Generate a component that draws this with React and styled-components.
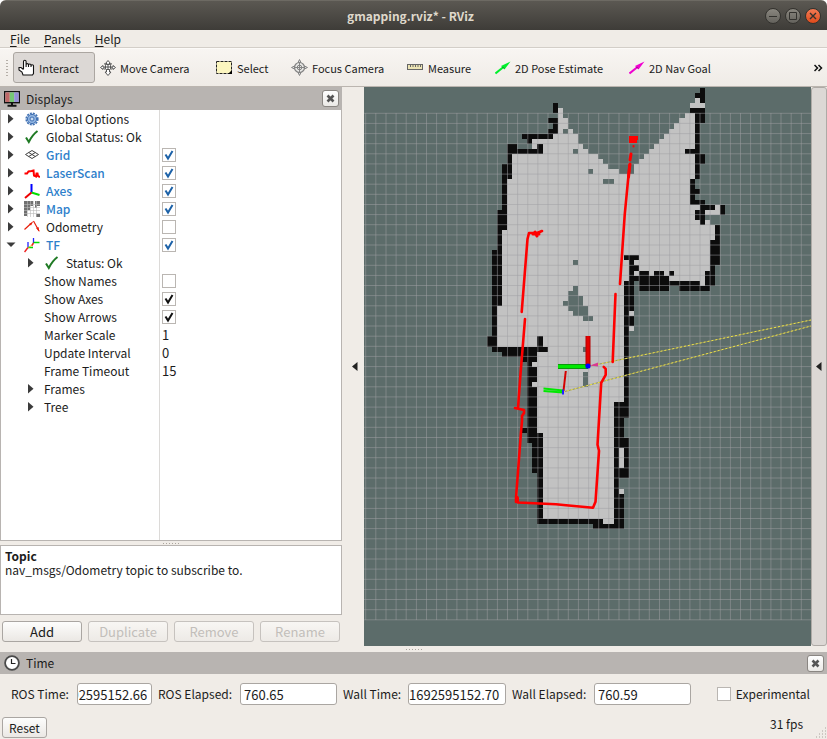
import React, { useEffect, useRef } from "react";
import styled, { createGlobalStyle } from "styled-components";

const Global = createGlobalStyle`
  * { box-sizing: border-box; }
  body {
    margin: 0;
    background: #fff;
    color: #1c1c1c;
    font: 12px/18px "Noto Sans CJK JP", "Noto Sans", sans-serif;
  }
  button, input { font: inherit; color: inherit; }
  button { cursor: pointer; }
  svg { display: block; flex: none; }
`;

/* ---------- window ---------- */

const Window = styled.div`
  display: flex;
  flex-direction: column;
  height: 100vh;
  overflow: hidden;
  background: #f0ece7;
  border-radius: 6px 6px 0 0;
`;

const TitleBar = styled.header`
  flex: none;
  display: grid;
  grid-template-columns: 1fr auto 1fr;
  align-items: center;
  height: 30px;
  padding-right: 6px;
  background: linear-gradient(#5b5852, #3e3c38);
  border-top: 1px solid #6d6a63;
`;

const Title = styled.h1`
  grid-column: 2;
  margin: 0;
  font-size: 12px;
  line-height: 18px;
  font-weight: 700;
  color: #dfd8cb;
`;

const WindowButtons = styled.div`
  display: flex;
  justify-content: flex-end;
  gap: 4px;
`;

const RoundButton = styled.button`
  display: grid;
  place-items: center;
  width: 16px;
  height: 16px;
  padding: 0;
  border: 1px solid #33322e;
  border-radius: 50%;
  background: ${(p) => (p.$close ? "linear-gradient(#f37b55, #df4b1b)" : "linear-gradient(#8a877f, #64625c)")};
`;

const MenuBar = styled.nav`
  flex: none;
  display: flex;
  gap: 14px;
  height: 18px;
  padding: 0 10px;
  border-bottom: 1px solid #d3cec8;
`;

const MenuItem = styled.button`
  padding: 0;
  border: 0;
  background: none;
  font-size: 12px;
  line-height: 17px;
`;

const Key = styled.span`
  text-decoration: underline;
  text-underline-offset: 2px;
`;

const ToolBar = styled.div`
  flex: none;
  display: flex;
  align-items: center;
  height: 39px;
  padding: 0 4px 0 5px;
  background: linear-gradient(#f8f5f2, #efebe6);
  border-top: 1px solid #fcfaf8;
  border-bottom: 1px solid #bbb5af;
  overflow: hidden;
`;

const Grip = styled.div`
  width: 4px;
  height: 18px;
  margin-right: 4px;
  background: radial-gradient(circle, #b5afa8 1px, transparent 1px) 0 0 / 4px 3px;
`;

const Tool = styled.button`
  display: flex;
  align-items: center;
  gap: 4px;
  flex: none;
  height: 31px;
  width: ${(p) => p.$width}px;
  padding: 0 4px;
  border: 1px solid ${(p) => (p.$active ? "#aba6a1" : "transparent")};
  border-radius: 3px;
  background: ${(p) => (p.$active ? "#dcd8d5" : "none")};
  font-size: 11px;
  white-space: nowrap;
`;

const More = styled.button`
  margin-left: auto;
  padding: 0;
  border: 0;
  background: none;
`;

const Workspace = styled.main`
  flex: 1;
  display: flex;
  min-height: 0;
`;

/* ---------- dock panels ---------- */

const Dock = styled.section`
  flex: none;
  display: flex;
  flex-direction: column;
  width: 342px;
`;

const DockHeader = styled.div`
  flex: none;
  display: flex;
  align-items: center;
  gap: 6px;
  height: ${(p) => p.$height}px;
  padding: 0 3px 0 4px;
  background: #b8b4b1;
`;

const DockTitle = styled.h2`
  flex: 1;
  margin: 0;
  font-size: 12px;
  line-height: 18px;
  font-weight: 400;
`;

const CloseButton = styled.button`
  display: grid;
  place-items: center;
  width: 17px;
  height: 17px;
  padding: 0;
  border: 1px solid #8a8682;
  border-radius: 3px;
  background: linear-gradient(#fefefe, #ebe9e6);
`;

const Tree = styled.div`
  flex: 1;
  min-height: 0;
  overflow: hidden;
  border: 1px solid #b8b4b1;
  border-top: 0;
  background: linear-gradient(90deg, transparent 158px, #dcdad8 158px, #dcdad8 159px, transparent 159px) #fff;
`;

const TreeRow = styled.div`
  display: grid;
  grid-template-columns: 159px 1fr;
  align-items: center;
  height: 18px;
`;

const NameCell = styled.div`
  display: flex;
  align-items: center;
  padding-left: ${(p) => (p.$child ? 25 : 5)}px;
  color: ${(p) => (p.$link ? "#2e7fcb" : "#1c1c1c")};
  font-weight: ${(p) => (p.$link ? 500 : 400)};
  white-space: nowrap;
`;

const Expander = styled.span`
  display: grid;
  place-items: center;
  flex: none;
  width: 10px;
  height: 16px;
  margin-right: 8px;
`;

const RowIcon = styled.span`
  flex: none;
  width: 22px;
`;

const Value = styled.span`
  padding-left: 2px;
  font-size: 13px;
`;

const CheckCell = styled.span`
  display: grid;
  width: 14px;
  height: 14px;
  margin-left: ${(p) => (p.$tree ? 2 : 0)}px;
  & > * { grid-area: 1 / 1; }
  & > svg { pointer-events: none; }
`;

const Box = styled.input.attrs({ type: "checkbox" })`
  appearance: none;
  width: 14px;
  height: 14px;
  margin: 0;
  border: 1px solid #bab6b2;
  background: #fff;
`;

const Handle = styled.div`
  flex: none;
  align-self: center;
  width: 18px;
  height: ${(p) => p.$height}px;
  background: radial-gradient(circle, #aaa49d 1px, transparent 1px) 0 center / 3px 3px repeat-x;
`;

const Description = styled.div`
  flex: none;
  height: 70px;
  padding: 3px 4px;
  border: 1px solid #b8b4b1;
  background: #fff;
  line-height: 14px;
`;

const ButtonRow = styled.div`
  flex: none;
  display: grid;
  grid-template-columns: repeat(4, 1fr);
  gap: 6px;
  padding: 6px 2px 4px;
`;

const PushButton = styled.button`
  height: 21px;
  padding: 0 6px;
  border: 1px solid #aaa6a2;
  border-radius: 3px;
  background: linear-gradient(#fdfdfc, #ebe8e4);
  font-size: ${(p) => (p.$small ? 12 : 13)}px;
  line-height: 16px;
  &:disabled {
    color: #c2beba;
    border-color: #c6c2be;
    background: linear-gradient(#f8f6f3, #edeae6);
  }
`;

const CollapseStrip = styled.button`
  flex: none;
  display: grid;
  place-items: center;
  width: ${(p) => p.$width}px;
  padding: 0 0 0 ${(p) => (p.$raised ? 0 : 4)}px;
  border: ${(p) => (p.$raised ? "1px solid #aeaaa6" : "0")};
  border-radius: 3px;
  background: ${(p) => (p.$raised ? "#dcd8d5" : "none")};
`;

const View = styled.div`
  flex: 1;
  min-width: 0;
  background: #5c6c6a;
  & > svg { width: 100%; height: 100%; }
`;

/* ---------- time panel ---------- */

const TimeFields = styled.div`
  flex: none;
  display: flex;
  align-items: center;
  height: 40px;
  padding: 0 17px 0 11px;
  gap: 6px;
`;

const FieldLabel = styled.label`
  flex: none;
  width: ${(p) => p.$width}px;
  white-space: nowrap;
`;

const Field = styled.input`
  width: ${(p) => p.$width}px;
  height: 22px;
  padding: 0 ${(p) => (p.$scrolled ? "4px 0 0" : "3px")};
  border: 1px solid #aaa6a2;
  border-radius: 3px;
  background: #fff;
  font-size: 13px;
  margin-right: ${(p) => (p.$last ? "auto" : "0")};
`;

const ExperimentalLabel = styled.label`
  display: flex;
  align-items: center;
  gap: 5px;
  white-space: nowrap;
`;

const Footer = styled.footer`
  flex: none;
  display: flex;
  justify-content: space-between;
  align-items: flex-start;
  height: 25px;
  padding: 3px 0 0 2px;
`;

const Status = styled.div`
  display: flex;
  align-items: flex-end;
  align-self: stretch;
  gap: 12px;
`;

const Fps = styled.span`
  align-self: flex-start;
  line-height: 14px;
`;

/* ---------- icons ---------- */

const Svg = ({ w = 16, h = 16, children }) => (
  <svg width={w} height={h} viewBox={`0 0 ${w} ${h}`} fill="none" aria-hidden="true">
    {children}
  </svg>
);

const Hand = () => (
  <Svg w={17} h={17}>
    <path d="M5.500 10V2.500a1.300 1.300 0 0 1 2.600 0V8 5.800a1.200 1.200 0 0 1 2.400 0V8 6.300a1.200 1.200 0 0 1 2.500 0V8 7a1.200 1.200 0 0 1 2.500 0v7.500l-1 1.500H5l-1-3L1 11V8.500h2l2.500 2" fill="#fff" stroke="#111" strokeWidth="1.100" />
  </Svg>
);

const MoveIcon = () => (
  <Svg>
    <g stroke="#555" fill="#fff" strokeWidth="1">
      <path d="M8 .5l2.500 3H9v3.500h4V5.500l2.500 2-2.500 2V8H9.500v4H11l-3 3.500L5 12h1.500V8H3v1.500l-2.500-2 2.500-2V7h4V3.500H5.500z" />
      <path d="M4 3.500l7.500 6M12 3.500l-7.500 6" />
      <rect x="5.500" y="4.500" width="5" height="5" rx="1" />
      <path d="M8 5v4M6 7h4" />
    </g>
  </Svg>
);

const SelectIcon = () => (
  <Svg w={17} h={14}>
    <rect x=".5" y=".5" width="15" height="12" fill="#fcf6c0" stroke="#222" strokeDasharray="3 1" />
    <path d="M16 9v4h-4z" fill="#000" />
  </Svg>
);

const FocusIcon = () => (
  <Svg w={17} h={17}>
    <g stroke="#858585">
      <circle cx="8.500" cy="8.500" r="5" fill="#e8e8e6" strokeWidth="1.200" />
      <circle cx="8.500" cy="8.500" r="2.300" />
      <path d="M8.500 1v15M1 8.500h15" />
      <path d="M7 3.500h3L8.500 .5zM7 13.500h3l-1.500 3zM3.500 7v3L.5 8.500zM13.500 7v3l3-1.500z" fill="#ddd" />
    </g>
  </Svg>
);

const Ruler = () => (
  <Svg w={17} h={7}>
    <rect x=".5" y=".5" width="15" height="5" fill="#ece4b4" stroke="#666" />
    <path d="M3.500 1v2M6 1v2M8.500 1v2M11 1v2M13.500 1v2" stroke="#666" />
  </Svg>
);

const ArrowTool = ({ color }) => (
  <Svg w={16} h={14}>
    <path d="M.5 12.500l8-6.500" stroke={color} strokeWidth="2" />
    <path d="M15.500 .5L6 5l3.500 3.500z" fill={color} />
    <path d="M7.500 6l1.500 1.500" stroke="#222" strokeOpacity=".6" />
  </Svg>
);

const Monitor = () => (
  <Svg>
    <rect x=".7" y=".7" width="14.600" height="11" fill="#eee" stroke="#111" strokeWidth="1.400" />
    <path d="M1.400 1.400h4.400V11H1.400z" fill="#c06868" />
    <path d="M5.800 1.400h4.400V11H5.800z" fill="#76c876" />
    <path d="M10.200 1.400h4.400V11h-4.400z" fill="#9490d8" />
    <path d="M8 12v2M3.500 14.800h9" stroke="#111" strokeWidth="2" />
  </Svg>
);

const Clock = () => (
  <Svg>
    <circle cx="8" cy="8" r="6.900" fill="#fff" stroke="#4a4a4a" strokeWidth="1.800" />
    <path d="M7.500 4v4.500h4" stroke="#222" strokeWidth="1.200" />
  </Svg>
);

const Gear = () => (
  <Svg>
    <circle cx="8" cy="8" r="5.700" stroke="#4272b4" strokeWidth="1.800" strokeDasharray="2 1" />
    <circle cx="8" cy="8" r="4.600" fill="#8fb3e0" stroke="#4272b4" />
    <circle cx="8" cy="8" r="2" fill="#c9dcf2" stroke="#4272b4" />
  </Svg>
);

const Tick = () => (
  <Svg>
    <path d="M2 8.500l2.800 4.500C7 8.500 9.500 5 13.500 2" stroke="#1f7a24" strokeWidth="2" />
  </Svg>
);

const GridIcon = () => (
  <Svg>
    <path d="M8 3.500l6.500 4L8 11.500l-6.500-4zM4.700 5.500l6.600 4M11.300 5.500l-6.600 4" stroke="#444" />
  </Svg>
);

const Laser = () => (
  <Svg>
    <path d="M.5 8.500H3L4.500 6.500l3-.5 2-.5.5 5 2 1 .5-3h1l.5 2.500 2 1" stroke="#f00" strokeWidth="2" />
  </Svg>
);

const AxesIcon = () => (
  <Svg>
    <path d="M7.500 9.500V1" stroke="#00f" strokeWidth="2" />
    <path d="M7.500 9.500l8 2.500" stroke="#0d0" strokeWidth="2" />
    <path d="M7.500 9.500L1 15" stroke="#e00" strokeWidth="2" />
  </Svg>
);

const MapIcon = () => (
  <Svg>
    <rect width="16" height="16" fill="#fff" />
    <path d="M0 0h9v5H6v4H3v6H0zM11 0h5v5h-3v2h-2zM12 13h4v3h-4z" fill="#707070" />
    <path d="M3.500 0v16M6.500 0v16M9.500 0v16M12.500 0v16M0 3.500h16M0 6.500h16M0 9.500h16M0 12.500h16" stroke="#bbb" strokeWidth=".6" />
  </Svg>
);

const Odom = () => (
  <Svg>
    <path d="M.5 10.500L7 4.500M9.500 2l5.500 10" stroke="#e8200c" strokeWidth="1.200" />
    <path d="M9.500 2L5 5l2 1.500zM15.500 13l-1-5-2.500 1z" fill="#e8200c" />
  </Svg>
);

const TfIcon = () => (
  <Svg>
    <path d="M9.500 1v5M4 5v5.500" stroke="#22f" strokeWidth="1.300" />
    <path d="M9.500 5.500h6M4 10.500h5" stroke="#0d0" strokeWidth="1.300" />
    <path d="M9.500 6l-2 3M4 10.500L.5 15" stroke="#e22" strokeWidth="1.500" />
    <path d="M8 8l-3.500 2.500" stroke="#f0c020" />
  </Svg>
);

const Cross = () => (
  <Svg w={9} h={9}>
    <path d="M1.500 1.500l6 6M7.500 1.500l-6 6" stroke="#555" strokeWidth="2.600" />
  </Svg>
);

const CheckMark = ({ color }) => (
  <Svg w={14} h={14}>
    <path d="M3.500 6.500L6 10.500 10.500 3" stroke={color} strokeWidth="2" />
  </Svg>
);

const RightArrow = () => (
  <Svg w={6} h={10}>
    <path d="M0 0v9.500L5.500 4.700z" fill="#3b3b3b" />
  </Svg>
);

const DownArrow = () => (
  <Svg w={10} h={10}>
    <path d="M.5 2.500h9L5 7z" fill="#3b3b3b" />
  </Svg>
);

const LeftArrow = () => (
  <Svg w={6} h={10}>
    <path d="M5.500 0v9L0 4.500z" fill="#222" />
  </Svg>
);

/* ---------- occupancy map ---------- */

// Cells are [column, row, width, height] on a lattice of map cells.
const FREE = [
  [14, 4, 1, 4], [15, 6, 1, 3], [14, 8, 3, 1], [13, 9, 5, 1], [9, 10, 9, 1], [9, 11, 1, 1],
  [11, 11, 8, 1], [11, 12, 9, 1], [5, 13, 17, 1], [5, 14, 18, 1], [5, 15, 19, 1], [5, 16, 21, 1],
  [41, 2, 1, 1], [40, 3, 3, 1],
  [39, 5, 2, 1], [38, 6, 3, 1], [37, 7, 4, 1], [36, 8, 5, 1], [35, 9, 6, 1], [34, 10, 7, 1],
  [33, 11, 8, 1], [32, 12, 9, 1], [31, 13, 10, 1], [30, 14, 11, 1], [29, 15, 12, 2],
  [4, 17, 37, 9], [41, 23, 2, 4], [45, 23, 1, 1], [43, 24, 3, 1], [43, 26, 1, 1],
  [3, 26, 40, 5], [43, 27, 2, 3], [3, 30, 41, 7], [30, 37, 14, 1], [42, 38, 1, 1],
  [2, 37, 26, 14], [12, 51, 16, 1], [10, 52, 18, 2], [9, 54, 19, 1], [9, 55, 19, 7],
  [10, 62, 16, 23], [23, 85, 3, 1], [26, 71, 1, 4], [26, 79, 1, 1],
];

const UNKNOWN = [
  [15, 8, 1, 1], [17, 12, 1, 1], [20, 16, 1, 1], [23, 18, 2, 1], [17, 34, 1, 1], [17, 39, 1, 1],
  [16, 40, 2, 1], [16, 41, 3, 1], [15, 42, 4, 1], [16, 43, 4, 1], [17, 44, 3, 1], [19, 45, 2, 1],
  [19, 51, 1, 1], [19, 56, 1, 3],
];

const OCCUPIED = [
  [13, 3, 1, 2], [12, 6, 2, 1], [13, 7, 1, 1], [12, 8, 2, 1], [7, 9, 6, 1], [8, 10, 1, 1],
  [10, 11, 1, 2], [6, 12, 5, 1], [4, 11, 2, 2], [4, 13, 1, 5], [3, 15, 1, 13], [2, 24, 1, 8],
  [1, 32, 2, 11], [1, 43, 1, 9], [0, 49, 2, 2], [1, 51, 11, 1], [3, 52, 7, 1], [7, 53, 3, 1],
  [10, 49, 1, 2], [8, 54, 1, 14], [9, 55, 1, 3], [9, 59, 1, 9], [7, 67, 1, 1], [8, 68, 3, 2],
  [9, 70, 2, 6], [10, 76, 1, 9], [10, 85, 13, 1], [21, 86, 6, 1], [25, 62, 1, 24], [26, 80, 1, 6],
  [26, 62, 2, 3], [27, 38, 1, 24], [26, 65, 1, 6], [27, 69, 1, 6], [26, 75, 2, 2],
  [28, 38, 1, 6], [28, 45, 1, 2], [27, 33, 3, 1], [28, 34, 1, 4], [29, 35, 1, 1], [29, 37, 1, 1],
  [30, 36, 2, 1], [33, 36, 2, 1], [36, 36, 1, 1], [30, 37, 6, 3], [36, 38, 6, 1], [38, 39, 6, 1],
  [43, 36, 2, 3], [44, 30, 2, 5], [44, 35, 1, 1], [45, 27, 1, 3], [42, 23, 1, 4],
  [42, 0, 1, 3], [41, 1, 1, 1], [40, 4, 3, 1], [41, 5, 2, 2], [41, 7, 1, 11], [39, 12, 3, 1],
  [41, 13, 2, 2], [40, 18, 1, 5], [41, 20, 1, 1], [41, 22, 2, 1], [41, 24, 1, 2],
  [43, 23, 2, 1], [46, 23, 1, 2],
];

const SMALL_FREE = [[28, 44, 1, 1], [28, 47, 1, 1]];

const toPath = (cells) => cells.map(([c, r, w, h]) => `M${c} ${r}h${w}v${h}h${-w}z`).join("");

const STEP = 10.13;
const columns = Array.from({ length: 45 }, (_, i) => `M${(365.7 + i * STEP).toFixed(1)} 113V620`).join("");
const rows = Array.from({ length: 51 }, (_, i) => `M364 ${(113.3 + i * STEP).toFixed(1)}H811`).join("");

const MapView = () => (
  <svg viewBox="364 87 447 559" preserveAspectRatio="xMidYMid slice" fill="none" role="img" aria-label="Map view">
    <g transform="translate(486.8 88) scale(5.07)" shapeRendering="crispEdges">
      <path d={toPath(FREE)} fill="#c2c2c2" />
      <path d={toPath(UNKNOWN)} fill="#5c6c6a" />
      <path d={toPath(OCCUPIED)} fill="#0c0c0c" />
      <path d={toPath(SMALL_FREE)} fill="#c2c2c2" />
    </g>
    <path d={columns + rows} stroke="#a0a0a4" strokeOpacity=".5" />
    <g stroke="#8f8f5c">
      <path d="M590 366L811 320M563 392L811 326" />
      <path d="M590 366L811 320M563 392L811 326" stroke="#ece24a" strokeDasharray="2 2" />
    </g>
    <g stroke="#f00" strokeWidth="2.600" strokeLinejoin="round" strokeLinecap="round">
      <path d="M542 231l-5 2-8 0-1.500 6-5.800 73" />
      <path d="M533 234h6M535 232l2 4" strokeWidth="3" />
      <path d="M525 319l-4.500 55-2.500 34M515 408l9 2v3l-2 3v5l-1 11-5 66v4" />
      <path d="M517 497v4l1 1.500 38 1.800 10 1 27 2.500 2.500-6 3.500-51-1.500-6 3.700-62 4.500-8v-6l-2-2" />
      <path d="M517 498v3" strokeWidth="4" />
      <path d="M615.500 294l-2.800 68" />
      <path d="M631 138h5M631 141h4" strokeWidth="4" strokeLinecap="square" />
      <path d="M633.500 146v.5" strokeWidth="2" />
      <path d="M631 154l-1 6M630 164l-1.500 13" strokeWidth="3" />
      <path d="M629.500 165l-4.800 50-4.700 69" />
    </g>
    <path d="M558 366.500h30" stroke="#0a9a0a" strokeWidth="5" />
    <path d="M558 366.500h30" stroke="#00e800" strokeWidth="3" />
    <path d="M588 336v30" stroke="#b40000" strokeWidth="5" />
    <path d="M588 336v30" stroke="#e40000" strokeWidth="3" />
    <path d="M590 365.500l8-3v4z" fill="#d83a90" />
    <circle cx="588" cy="366" r="2.600" fill="#00f" />
    <path d="M543.500 388.500l19.500 2M543.500 391l19.500 1.500" stroke="#00e800" strokeWidth="2" />
    <path d="M565.800 371l-2.300 20" stroke="#d40000" strokeWidth="2" />
    <path d="M563 389.500v5" stroke="#22f" strokeWidth="2" />
  </svg>
);

/* ---------- data ---------- */

const TOOLS = [
  { label: "Interact", icon: <Hand />, width: 82, active: true },
  { label: "Move Camera", icon: <MoveIcon />, width: 116 },
  { label: "Select", icon: <SelectIcon />, width: 75 },
  { label: "Focus Camera", icon: <FocusIcon />, width: 116 },
  { label: "Measure", icon: <Ruler />, width: 88 },
  { label: "2D Pose Estimate", icon: <ArrowTool color="#00f02c" />, width: 134 },
  { label: "2D Nav Goal", icon: <ArrowTool color="#f000d0" />, width: 100 },
];

const ROWS = [
  { name: "Global Options", icon: <Gear />, closed: true },
  { name: "Global Status: Ok", icon: <Tick />, closed: true },
  { name: "Grid", icon: <GridIcon />, closed: true, link: true, checked: true },
  { name: "LaserScan", icon: <Laser />, closed: true, link: true, checked: true },
  { name: "Axes", icon: <AxesIcon />, closed: true, link: true, checked: true },
  { name: "Map", icon: <MapIcon />, closed: true, link: true, checked: true },
  { name: "Odometry", icon: <Odom />, closed: true, checked: false },
  { name: "TF", icon: <TfIcon />, open: true, link: true, checked: true },
  { name: "Status: Ok", icon: <Tick />, closed: true, child: true },
  { name: "Show Names", child: true, checked: false },
  { name: "Show Axes", child: true, checked: true },
  { name: "Show Arrows", child: true, checked: true },
  { name: "Marker Scale", child: true, value: "1" },
  { name: "Update Interval", child: true, value: "0" },
  { name: "Frame Timeout", child: true, value: "15" },
  { name: "Frames", child: true, closed: true },
  { name: "Tree", child: true, closed: true },
];

const FIELDS = [
  { id: "ros-time", label: "ROS Time:", value: "1692595152.66", labelWidth: 60, width: 75, scrolled: true },
  { id: "ros-elapsed", label: "ROS Elapsed:", value: "760.65", labelWidth: 76, width: 97 },
  { id: "wall-time", label: "Wall Time:", value: "1692595152.70", labelWidth: 59, width: 98, scrolled: true },
  { id: "wall-elapsed", label: "Wall Elapsed:", value: "760.59", labelWidth: 76, width: 97 },
];

const Row = ({ row }) => (
  <TreeRow>
    <NameCell $child={row.child} $link={row.link}>
      <Expander>
        {row.closed && <RightArrow />}
        {row.open && <DownArrow />}
      </Expander>
      {row.icon && <RowIcon>{row.icon}</RowIcon>}
      {row.name}
    </NameCell>
    {row.checked !== undefined && (
      <CheckCell $tree>
        <Box defaultChecked={row.checked} aria-label={row.name} />
        {row.checked && <CheckMark color={row.child ? "#111" : "#1d62a8"} />}
      </CheckCell>
    )}
    {row.value && <Value>{row.value}</Value>}
  </TreeRow>
);

const TimeField = ({ field, last }) => {
  const ref = useRef(null);
  useEffect(() => {
    if (field.scrolled) ref.current.scrollLeft = ref.current.scrollWidth;
  }, [field.scrolled]);
  return (
    <>
      <FieldLabel htmlFor={field.id} $width={field.labelWidth}>{field.label}</FieldLabel>
      <Field ref={ref} id={field.id} defaultValue={field.value} readOnly $width={field.width} $scrolled={field.scrolled} $last={last} />
    </>
  );
};

export default function App() {
  return (
    <Window>
      <Global />
      <TitleBar>
        <Title>gmapping.rviz* - RViz</Title>
        <WindowButtons>
          <RoundButton aria-label="Minimize">
            <Svg w={8} h={8}><path d="M0 4.500h8" stroke="#33322e" /></Svg>
          </RoundButton>
          <RoundButton aria-label="Maximize">
            <Svg w={8} h={8}><path d="M.5 .5h7v7h-7z" stroke="#33322e" /></Svg>
          </RoundButton>
          <RoundButton $close aria-label="Close">
            <Svg w={8} h={8}><path d="M1 1l6 6M7 1L1 7" stroke="#33322e" strokeWidth="1.400" /></Svg>
          </RoundButton>
        </WindowButtons>
      </TitleBar>

      <MenuBar>
        {["File", "Panels", "Help"].map((m) => (
          <MenuItem key={m}><Key>{m[0]}</Key>{m.slice(1)}</MenuItem>
        ))}
      </MenuBar>

      <ToolBar>
        <Grip />
        {TOOLS.map((t) => (
          <Tool key={t.label} $active={t.active} $width={t.width}>{t.icon}{t.label}</Tool>
        ))}
        <More aria-label="More tools">
          <Svg w={9} h={8}><path d="M.5 1l3 3-3 3M4.500 1l3 3-3 3" stroke="#111" strokeWidth="1.500" /></Svg>
        </More>
      </ToolBar>

      <Workspace>
        <Dock>
          <DockHeader $height={23}>
            <Monitor />
            <DockTitle>Displays</DockTitle>
            <CloseButton aria-label="Close Displays"><Cross /></CloseButton>
          </DockHeader>
          <Tree>{ROWS.map((r) => <Row key={r.name} row={r} />)}</Tree>
          <Handle $height={4} />
          <Description>
            <strong>Topic</strong>
            <br />
            nav_msgs/Odometry topic to subscribe to.
          </Description>
          <ButtonRow>
            <PushButton>Add</PushButton>
            <PushButton disabled>Duplicate</PushButton>
            <PushButton disabled>Remove</PushButton>
            <PushButton disabled>Rename</PushButton>
          </ButtonRow>
        </Dock>
        <CollapseStrip $width={22} aria-label="Collapse left panel"><LeftArrow /></CollapseStrip>
        <View><MapView /></View>
        <CollapseStrip $width={16} $raised aria-label="Collapse right panel"><LeftArrow /></CollapseStrip>
      </Workspace>

      <Handle $height={6} />

      <DockHeader $height={22}>
        <Clock />
        <DockTitle>Time</DockTitle>
        <CloseButton aria-label="Close Time"><Cross /></CloseButton>
      </DockHeader>
      <TimeFields>
        {FIELDS.map((f, i) => <TimeField key={f.id} field={f} last={i === FIELDS.length - 1} />)}
        <ExperimentalLabel>
          <CheckCell><Box /></CheckCell>
          Experimental
        </ExperimentalLabel>
      </TimeFields>
      <Footer>
        <PushButton $small>Reset</PushButton>
        <Status>
          <Fps>31 fps</Fps>
          <Svg w={12} h={12}>
            <path d="M10 1h1M7 4h1M10 4h1M4 7h1M7 7h1M10 7h1M1 10h1M4 10h1M7 10h1M10 10h1" stroke="#aaa49d" />
          </Svg>
        </Status>
      </Footer>
    </Window>
  );
}
